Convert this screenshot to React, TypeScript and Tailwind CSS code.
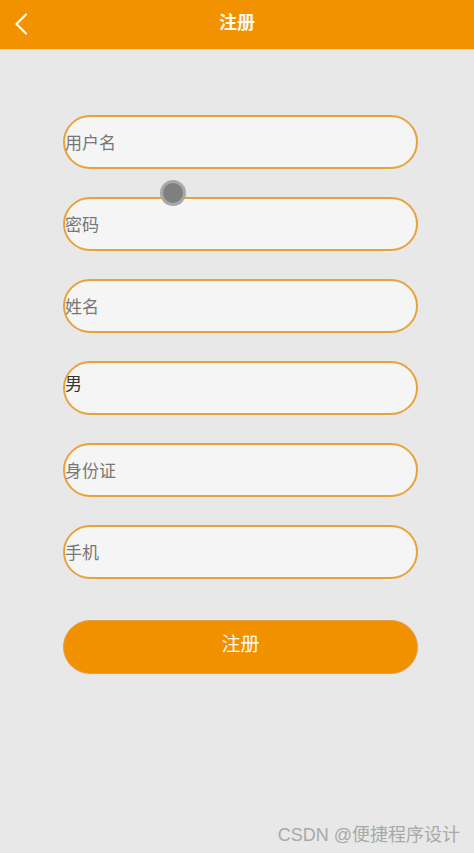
import React from "react";

const fields = [
  { label: "用户名", value: false },
  { label: "密码", value: false },
  { label: "姓名", value: false },
  { label: "男", value: true },
  { label: "身份证", value: false },
  { label: "手机", value: false },
];

export default function App() {
  return (
    <div
      className="relative w-[474px] h-[853px] bg-[#e8e8e8] overflow-hidden"
      style={{ fontFamily: '"Liberation Sans", "Noto Sans CJK SC", sans-serif' }}
    >
      <div className="relative h-[50px] bg-[#f39200] flex items-center justify-center border-b border-[#f6d9b0]">
        <svg
          className="absolute left-[14px] top-[13px]"
          width="14"
          height="22"
          viewBox="0 0 14 22"
          fill="none"
          stroke="#fff8e8"
          strokeWidth="2.2"
          strokeLinecap="round"
          strokeLinejoin="round"
        >
          <path d="M12 1.5 L2.5 11 L12 20.5" />
        </svg>
        <span className="text-[#fffaf0] text-[18px] font-bold -mt-[2px]">注册</span>
      </div>

      <div className="flex flex-col px-[63px] pt-[65px] gap-[28px] w-[481px]">
        {fields.map((f) => (
          <div
            key={f.label}
            className="h-[54px] w-[355px] rounded-full border-2 border-[#e9a23a] bg-[#f5f5f5] flex items-center"
          >
            <span
              className={
                f.value
                  ? "text-[17px] text-[#333] -mt-[6px]"
                  : "text-[17px] text-[#777] mt-[3px]"
              }
            >
              {f.label}
            </span>
          </div>
        ))}
        <button className="mt-[13px] h-[54px] w-[355px] rounded-full bg-[#f29100] border border-[#e0a050] text-[#fffaf0] text-[19px] flex items-center justify-center pb-[4px]">
          注册
        </button>
      </div>

      <div className="absolute left-[160px] top-[180px] w-[26px] h-[26px] rounded-full bg-[#7f7f7f] border-[3px] border-[#a8a8a8]" />

      <div className="absolute right-[14px] bottom-[4px] text-[18px] text-[#a9a9a9]">
        CSDN @便捷程序设计
      </div>
    </div>
  );
}
